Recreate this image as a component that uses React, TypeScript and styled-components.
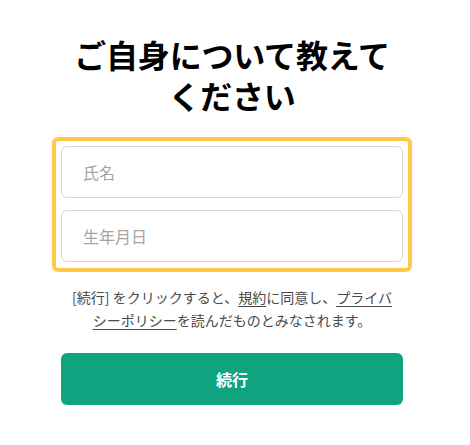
import React from "react";
import styled, { createGlobalStyle } from "styled-components";

const Global = createGlobalStyle`
  html, body { margin: 0; padding: 0; background: #ffffff; }
  body { font-family: "Noto Sans CJK JP", "Noto Sans", sans-serif; }
  * { box-sizing: border-box; }
`;

const Page = styled.main`
  width: 470px;
  height: 445px;
  display: flex;
  justify-content: center;
  padding-right: 6px;
`;

const Column = styled.div`
  width: 360px;
  display: flex;
  flex-direction: column;
  align-items: center;
  padding-top: 34px;
`;

const Title = styled.h1`
  margin: 0;
  width: 342px;
  font-size: 32px;
  line-height: 41px;
  font-weight: 700;
  color: #000000;
  text-align: center;
  letter-spacing: -0.2px;
`;

const FieldGroup = styled.div`
  margin-top: 21px;
  width: 360px;
  border: 4px solid #ffc94a;
  border-radius: 6px;
  padding: 5px 5px 6px;
  display: flex;
  flex-direction: column;
  gap: 12px;
`;

const Input = styled.input`
  width: 100%;
  height: 52px;
  border: 1px solid #d6d6d9;
  border-radius: 6px;
  padding: 0 21px;
  font-family: "Noto Sans CJK JP", "Noto Sans", sans-serif;
  font-size: 16px;
  color: #2d333a;
  outline: none;
  background: #fff;
  &::placeholder { color: #a4a4a4; }
`;

const Terms = styled.p`
  margin: 14px 0 0;
  width: 326px;
  font-size: 14px;
  line-height: 23px;
  color: #4a4a4a;
  text-align: center;
`;

const Link = styled.a`
  color: #4a4a4a;
  text-decoration: underline;
  text-underline-offset: 3px;
`;

const Button = styled.button`
  margin-top: 21px;
  width: 342px;
  height: 52px;
  border: none;
  border-radius: 6px;
  background: #10a37f;
  color: #ffffff;
  font-family: "Noto Sans CJK JP", "Noto Sans", sans-serif;
  font-size: 16px;
  font-weight: 700;
  cursor: pointer;
`;

export default function App() {
  return (
    <>
      <Global />
      <Page>
        <Column>
          <Title>
            ご自身について教えて
            <br />
            ください
          </Title>
          <FieldGroup>
            <Input placeholder="氏名" />
            <Input placeholder="生年月日" />
          </FieldGroup>
          <Terms>
            [続行] をクリックすると、<Link href="#">規約</Link>に同意し、
            <Link href="#">プライバシーポリシー</Link>を読んだものとみなされます。
          </Terms>
          <Button>続行</Button>
        </Column>
      </Page>
    </>
  );
}
